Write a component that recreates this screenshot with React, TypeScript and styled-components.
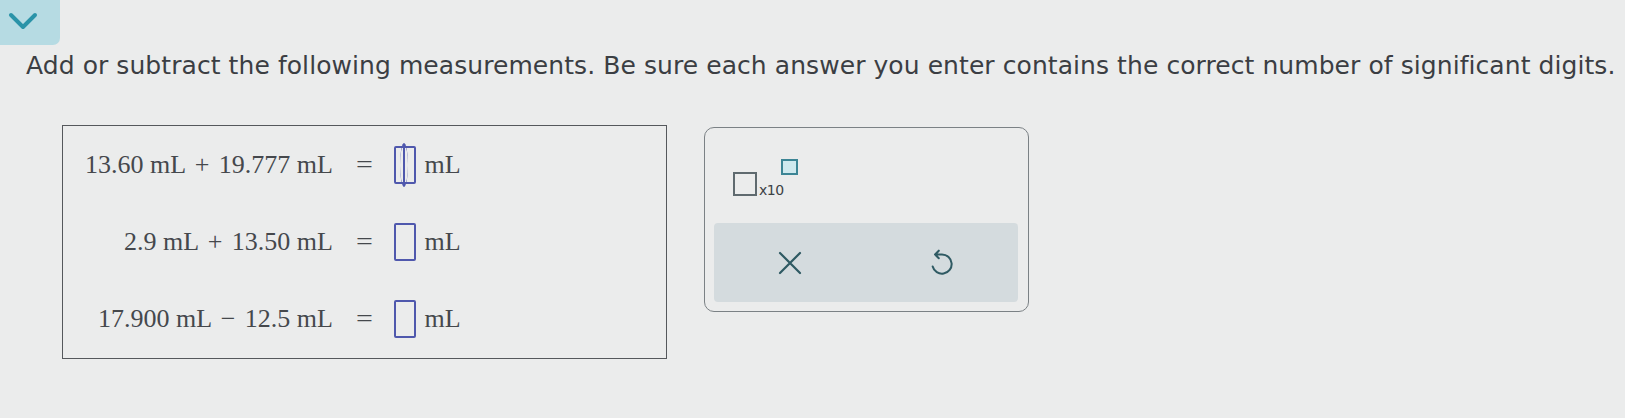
import React from 'react'
import styled, { createGlobalStyle } from 'styled-components'

const GlobalStyle = createGlobalStyle`
  html, body {
    margin: 0;
    padding: 0;
    background: #ebecec;
  }
  body {
    font-family: 'DejaVu Sans', Verdana, sans-serif;
    color: #3b3e43;
  }
`

const Page = styled.div`
  width: 1625px;
  height: 418px;
  overflow: hidden;
`

const Tab = styled.button`
  display: flex;
  align-items: center;
  justify-content: center;
  width: 60px;
  height: 45px;
  padding: 0 14px 4px 0;
  border: none;
  border-bottom-right-radius: 7px;
  background: #b6dbe3;
`

const Prompt = styled.p`
  margin: 6px 0 0 26px;
  font-size: 25px;
  line-height: 30px;
  letter-spacing: 0.07px;
  white-space: nowrap;
`

const Panels = styled.div`
  display: flex;
  align-items: flex-start;
  gap: 37px;
  margin: 44px 0 0 62px;
`

const EquationBox = styled.div`
  display: grid;
  grid-template-columns: auto auto auto auto;
  grid-auto-rows: 77px;
  align-items: center;
  justify-content: start;
  width: 605px;
  height: 234px;
  box-sizing: border-box;
  padding: 0 0 0 22px;
  border: 1.5px solid #55585c;
  font-family: 'Liberation Serif', 'Times New Roman', serif;
  font-size: 26px;
  color: #45484c;
`

const Expr = styled.div`
  justify-self: end;
  white-space: nowrap;
`

const Op = styled.span`
  margin: 0 3px;
`

const Equals = styled.div`
  margin: 0 22px 0 24px;
  transform: scaleX(1.15);
`

const AnswerBox = styled.div<{ $focused?: boolean }>`
  position: relative;
  width: 22px;
  height: 38px;
  box-sizing: border-box;
  border: 2px solid #4f58ad;
  border-radius: 2px;
  ${(p) =>
    p.$focused &&
    `
    &::before {
      content: '';
      position: absolute;
      left: 7px;
      top: -4px;
      width: 2px;
      height: 42px;
      background: #4f58ad;
    }
    &::after {
      content: '';
      position: absolute;
      left: 4px;
      top: -5px;
      width: 8px;
      height: 40px;
      border-top: 2px solid #4f58ad;
      border-bottom: 2px solid #4f58ad;
      border-radius: 50%;
    }
  `}
`

const Unit = styled.div`
  margin-left: 9px;
`

const KeypadPanel = styled.div`
  display: flex;
  flex-direction: column;
  width: 325px;
  height: 185px;
  box-sizing: border-box;
  padding: 30px 10px 9px 9px;
  border: 1.5px solid #7b8185;
  border-radius: 10px;
  margin-top: 2px;
`

const Notation = styled.div`
  display: flex;
  align-items: flex-end;
  height: 38px;
  margin-left: 19px;
`

const BaseSlot = styled.div`
  width: 24px;
  height: 24px;
  box-sizing: border-box;
  border: 2px solid #5f6a6f;
`

const TimesTen = styled.span`
  font-family: 'DejaVu Sans', Verdana, sans-serif;
  font-size: 14px;
  line-height: 14px;
  margin: 0 0 -1px 2px;
  letter-spacing: -0.5px;
  color: #3c4246;
`

const ExpSlot = styled.div`
  align-self: flex-start;
  width: 17px;
  height: 16px;
  margin: 1px 0 0 -3px;
  box-sizing: border-box;
  border: 2px solid #3c8595;
  background: #cfe9ee;
`

const ButtonBar = styled.div`
  display: grid;
  grid-template-columns: 1fr 1fr;
  margin-top: auto;
  height: 79px;
  border-radius: 4px;
  background: #d4dbde;
`

const IconButton = styled.button`
  display: flex;
  align-items: center;
  justify-content: center;
  border: none;
  background: transparent;
  padding: 0;
  color: #2f5a63;
`

const rows = [
  { left: '13.60 mL', op: '+', right: '19.777 mL', focused: true },
  { left: '2.9 mL', op: '+', right: '13.50 mL' },
  { left: '17.900 mL', op: '\u2212', right: '12.5 mL' },
]

export default function App() {
  return (
    <Page>
      <GlobalStyle />
      <Tab aria-label="collapse">
        <svg width="30" height="18" viewBox="0 0 30 18">
          <path d="M3 3 L15 15 L27 3" fill="none" stroke="#2a93a8" strokeWidth="4" strokeLinecap="round" strokeLinejoin="round" />
        </svg>
      </Tab>
      <Prompt>
        Add or subtract the following measurements. Be sure each answer you enter contains the correct number of
        significant digits.
      </Prompt>
      <Panels>
        <EquationBox>
          {rows.map((r) => (
            <React.Fragment key={r.left}>
              <Expr>
                {r.left} <Op>{r.op}</Op> {r.right}
              </Expr>
              <Equals>=</Equals>
              <AnswerBox $focused={r.focused} />
              <Unit>mL</Unit>
            </React.Fragment>
          ))}
        </EquationBox>
        <KeypadPanel>
          <Notation>
            <BaseSlot />
            <TimesTen>x10</TimesTen>
            <ExpSlot />
          </Notation>
          <ButtonBar>
            <IconButton aria-label="clear">
              <svg width="26" height="26" viewBox="0 0 26 26">
                <path d="M3 3 L23 23 M23 3 L3 23" stroke="currentColor" strokeWidth="2.2" strokeLinecap="round" />
              </svg>
            </IconButton>
            <IconButton aria-label="undo">
              <svg width="26" height="30" viewBox="0 0 24 28">
                <path
                  d="M9 2.5 L5.5 6 L9 9.5 M5.5 6 H12 A9 9 0 1 1 3.3 17.3"
                  fill="none"
                  stroke="currentColor"
                  strokeWidth="1.9"
                  strokeLinecap="round"
                  strokeLinejoin="round"
                />
              </svg>
            </IconButton>
          </ButtonBar>
        </KeypadPanel>
      </Panels>
    </Page>
  )
}
